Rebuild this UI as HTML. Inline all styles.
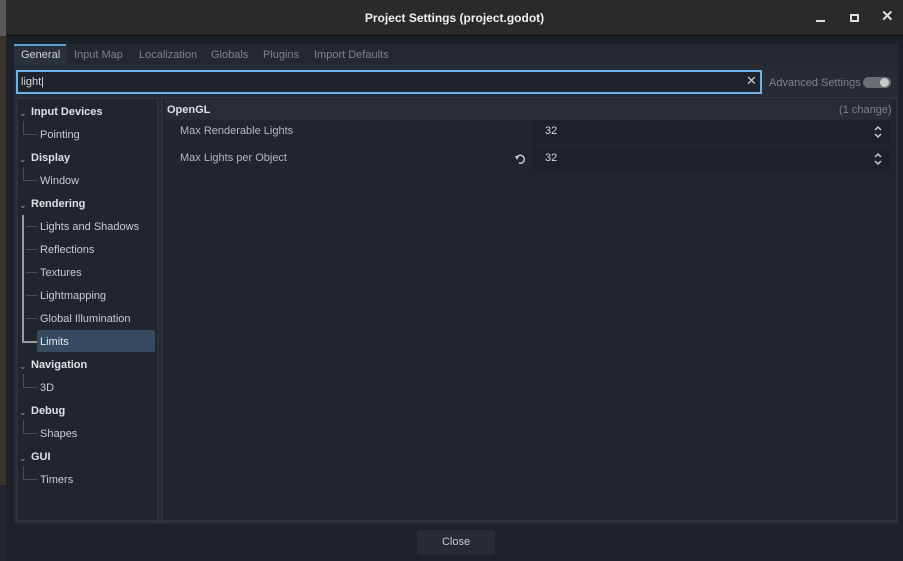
<!DOCTYPE html>
<html><head><style>
*{margin:0;padding:0;box-sizing:border-box}
body{width:903px;height:561px;overflow:hidden;background:#1d2129;font-family:"Liberation Sans",sans-serif;font-size:11px;line-height:15px;color:#c8cbd0;position:relative}
.a{position:absolute}
.tree div{position:absolute;white-space:nowrap}
.cat{font-weight:bold;color:#dfe1e4;left:31px}
.sub{left:40px;color:#c9ccd0}
.chev{left:19px;color:#9aa0a8;font-size:9px}
.ln{position:absolute;background:#4a4f57}
</style></head><body>
<div class="a" style="left:0;top:0;width:6px;height:485px;background:#3b342d"></div>
<div class="a" style="left:0;top:0;width:6px;height:36px;background:#5a5a5a"></div>
<div class="a" style="left:0;top:485px;width:6px;height:76px;background:#23262c"></div>
<div class="a" style="left:6px;top:0;width:897px;height:36px;background:#2a2a2a;border-bottom:1px solid #0e0e0e"></div>
<div class="a" style="left:6px;top:11px;width:897px;text-align:center;font-weight:bold;font-size:12px;color:#f0f0f0">Project Settings (project.godot)</div>
<div class="a" style="left:816px;top:20px;width:9px;height:2px;background:#ddd"></div>
<div class="a" style="left:850px;top:14px;width:9px;height:8px;border:2px solid #ddd"></div>
<div class="a" style="left:881px;top:9px;font-size:15px;font-weight:bold;color:#ddd">✕</div>
<div class="a" style="left:6px;top:37px;width:897px;height:524px;background:#1d2129"></div>
<div class="a" style="left:14px;top:44px;width:884px;height:21px;background:#232831"></div>
<div class="a" style="left:14px;top:44px;width:52px;height:21px;background:#2b313b;border-top:2px solid #5f9fd6"></div>
<div class="a" style="left:21px;top:48px;color:#d2d5d9">General</div>
<div class="a" style="left:74px;top:48px;color:#7d838b">Input Map</div>
<div class="a" style="left:139px;top:48px;color:#7d838b">Localization</div>
<div class="a" style="left:211px;top:48px;color:#7d838b">Globals</div>
<div class="a" style="left:263px;top:48px;color:#7d838b">Plugins</div>
<div class="a" style="left:314px;top:48px;color:#7d838b">Import Defaults</div>
<div class="a" style="left:14px;top:65px;width:884px;height:459px;background:#262b34"></div>
<div class="a" style="left:16px;top:70px;width:746px;height:24px;background:#1f232b;border:2px solid #6cb1ea"></div>
<div class="a" style="left:21px;top:75px;color:#d8dadd">light|</div>
<div class="a" style="left:746px;top:73px;color:#ccc;font-size:13px">✕</div>
<div class="a" style="left:769px;top:76px;color:#7d838b">Advanced Settings</div>
<div class="a" style="left:863px;top:77px;width:28px;height:11px;border-radius:6px;background:#6a6d72"></div>
<div class="a" style="left:880px;top:78px;width:9px;height:9px;border-radius:5px;background:#c9c9c9"></div>
<div class="a" style="left:16px;top:97px;width:143px;height:425px;background:#21252e;border:2px solid #2c313a"></div>
<div class="a" style="left:161px;top:97px;width:737px;height:425px;background:#21252e;border:2px solid #2c313a"></div>
<div class="tree">
<div class="a" style="left:37px;top:330px;width:118px;height:22px;background:#354b62;border-radius:2px;position:absolute"></div>
<div class="chev" style="top:106px">⌄</div><div class="cat" style="top:105px">Input Devices</div>
<div class="sub" style="top:128px">Pointing</div>
<div class="chev" style="top:152px">⌄</div><div class="cat" style="top:151px">Display</div>
<div class="sub" style="top:174px">Window</div>
<div class="chev" style="top:198px">⌄</div><div class="cat" style="top:197px">Rendering</div>
<div class="sub" style="top:220px">Lights and Shadows</div>
<div class="sub" style="top:243px">Reflections</div>
<div class="sub" style="top:266px">Textures</div>
<div class="sub" style="top:289px">Lightmapping</div>
<div class="sub" style="top:312px">Global Illumination</div>
<div class="sub" style="top:335px;color:#e8eaec">Limits</div>
<div class="chev" style="top:359px">⌄</div><div class="cat" style="top:358px">Navigation</div>
<div class="sub" style="top:381px">3D</div>
<div class="chev" style="top:405px">⌄</div><div class="cat" style="top:404px">Debug</div>
<div class="sub" style="top:427px">Shapes</div>
<div class="chev" style="top:451px">⌄</div><div class="cat" style="top:450px">GUI</div>
<div class="sub" style="top:473px">Timers</div>
</div>
<div class="ln" style="left:23px;top:121px;width:1px;height:14px"></div><div class="ln" style="left:23px;top:134px;width:14px;height:1px"></div>
<div class="ln" style="left:23px;top:167px;width:1px;height:14px"></div><div class="ln" style="left:23px;top:180px;width:14px;height:1px"></div>
<div class="ln" style="left:22px;top:215px;width:2px;height:127px;background:#9a9ea4"></div>
<div class="ln" style="left:22px;top:341px;width:15px;height:2px;background:#9a9ea4"></div>
<div class="ln" style="left:26px;top:226px;width:11px;height:1px"></div>
<div class="ln" style="left:26px;top:249px;width:11px;height:1px"></div>
<div class="ln" style="left:26px;top:272px;width:11px;height:1px"></div>
<div class="ln" style="left:26px;top:295px;width:11px;height:1px"></div>
<div class="ln" style="left:26px;top:318px;width:11px;height:1px"></div>
<div class="ln" style="left:23px;top:374px;width:1px;height:14px"></div><div class="ln" style="left:23px;top:387px;width:14px;height:1px"></div>
<div class="ln" style="left:23px;top:420px;width:1px;height:14px"></div><div class="ln" style="left:23px;top:433px;width:14px;height:1px"></div>
<div class="ln" style="left:23px;top:466px;width:1px;height:14px"></div><div class="ln" style="left:23px;top:479px;width:14px;height:1px"></div>
<div class="a" style="left:165px;top:100px;width:726px;height:20px;background:#272c35"></div>
<div class="a" style="left:167px;top:103px;font-weight:bold;color:#dfe1e4">OpenGL</div>
<div class="a" style="left:839px;top:103px;color:#7d838b">(1 change)</div>
<div class="a" style="left:180px;top:124px;color:#b5b9be">Max Renderable Lights</div>
<div class="a" style="left:180px;top:151px;color:#b5b9be">Max Lights per Object</div>
<div class="a" style="left:533px;top:120px;width:357px;height:24px;background:#1d2129;border-radius:2px"></div>
<div class="a" style="left:533px;top:147px;width:357px;height:24px;background:#1d2129;border-radius:2px"></div>
<div class="a" style="left:545px;top:124px;color:#d8dadd">32</div>
<div class="a" style="left:545px;top:151px;color:#d8dadd">32</div>
<svg class="a" style="left:873px;top:125px" width="10" height="14"><path d="M2 5 L5 2 L8 5 M2 9 L5 12 L8 9" stroke="#ccc" stroke-width="1.5" fill="none"/></svg>
<svg class="a" style="left:873px;top:152px" width="10" height="14"><path d="M2 5 L5 2 L8 5 M2 9 L5 12 L8 9" stroke="#ccc" stroke-width="1.5" fill="none"/></svg>
<svg class="a" style="left:514px;top:153px" width="12" height="12"><path d="M3 4 A4 4 0 1 1 5 10" stroke="#ccc" stroke-width="1.5" fill="none"/><path d="M1 3 L5 3 L3 7Z" fill="#ccc"/></svg>
<div class="a" style="left:417px;top:530px;width:78px;height:25px;background:#262b34;border-radius:2px;text-align:center;line-height:25px;color:#c8cbd0">Close</div>
</body></html>
